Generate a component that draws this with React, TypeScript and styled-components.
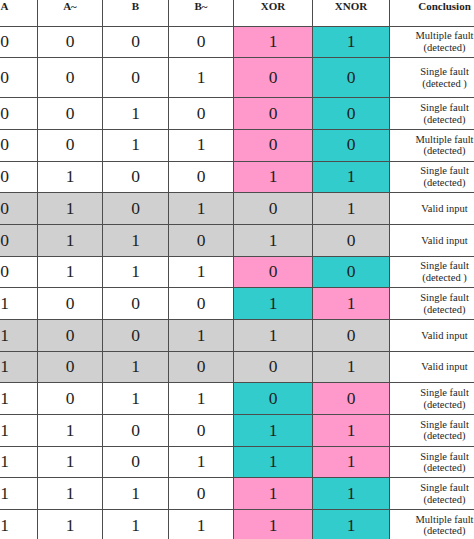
import React from 'react'
import styled, { createGlobalStyle } from 'styled-components'

type Tone = 'pink' | 'teal' | 'gray' | 'white'

interface Row {
  bits: string[]
  xor: string
  xnor: string
  xorTone: Tone
  xnorTone: Tone
  conclusion: string[]
  tall?: boolean
}

const single = ['Single fault', '(detected)']
const singleSp = ['Single fault', '(detected )']
const multiple = ['Multiple fault', '(detected)']
const valid = ['Valid input']

const rows: Row[] = [
  { bits: ['0', '0', '0', '0'], xor: '1', xnor: '1', xorTone: 'pink', xnorTone: 'teal', conclusion: multiple },
  { bits: ['0', '0', '0', '1'], xor: '0', xnor: '0', xorTone: 'pink', xnorTone: 'teal', conclusion: singleSp, tall: true },
  { bits: ['0', '0', '1', '0'], xor: '0', xnor: '0', xorTone: 'pink', xnorTone: 'teal', conclusion: single },
  { bits: ['0', '0', '1', '1'], xor: '0', xnor: '0', xorTone: 'pink', xnorTone: 'teal', conclusion: multiple },
  { bits: ['0', '1', '0', '0'], xor: '1', xnor: '1', xorTone: 'pink', xnorTone: 'teal', conclusion: single },
  { bits: ['0', '1', '0', '1'], xor: '0', xnor: '1', xorTone: 'gray', xnorTone: 'gray', conclusion: valid },
  { bits: ['0', '1', '1', '0'], xor: '1', xnor: '0', xorTone: 'gray', xnorTone: 'gray', conclusion: valid },
  { bits: ['0', '1', '1', '1'], xor: '0', xnor: '0', xorTone: 'pink', xnorTone: 'teal', conclusion: singleSp },
  { bits: ['1', '0', '0', '0'], xor: '1', xnor: '1', xorTone: 'teal', xnorTone: 'pink', conclusion: single },
  { bits: ['1', '0', '0', '1'], xor: '1', xnor: '0', xorTone: 'gray', xnorTone: 'gray', conclusion: valid },
  { bits: ['1', '0', '1', '0'], xor: '0', xnor: '1', xorTone: 'gray', xnorTone: 'gray', conclusion: valid },
  { bits: ['1', '0', '1', '1'], xor: '0', xnor: '0', xorTone: 'teal', xnorTone: 'pink', conclusion: single },
  { bits: ['1', '1', '0', '0'], xor: '1', xnor: '1', xorTone: 'teal', xnorTone: 'pink', conclusion: single },
  { bits: ['1', '1', '0', '1'], xor: '1', xnor: '1', xorTone: 'teal', xnorTone: 'pink', conclusion: single },
  { bits: ['1', '1', '1', '0'], xor: '1', xnor: '1', xorTone: 'pink', xnorTone: 'teal', conclusion: single },
  { bits: ['1', '1', '1', '1'], xor: '1', xnor: '1', xorTone: 'pink', xnorTone: 'teal', conclusion: multiple },
]

const tones: Record<Tone, string> = {
  pink: '#ff99cc',
  teal: '#33cccc',
  gray: '#d0d0d0',
  white: '#ffffff',
}

const widths = [66, 65, 66, 65, 79, 77, 110]
const headers = ['A', 'A~', 'B', 'B~', 'XOR', 'XNOR', 'Conclusion']

const App: React.FC = () => {
  return (
    <>
      <GlobalStyle />
      <Frame>
        <Table>
          <colgroup>
            {widths.map((w, i) => (
              <col key={i} style={{ width: w }} />
            ))}
          </colgroup>
          <thead>
            <HeadRow>
              {headers.map((h) => (
                <HeadCell key={h}>{h}</HeadCell>
              ))}
            </HeadRow>
          </thead>
          <tbody>
            {rows.map((r, i) => {
              const isValid = r.xorTone === 'gray'
              return (
                <BodyRow key={i} $tall={r.tall}>
                  {r.bits.map((b, j) => (
                    <Digit key={j} $tone={isValid ? 'gray' : 'white'}>
                      {b}
                    </Digit>
                  ))}
                  <Digit $tone={r.xorTone}>{r.xor}</Digit>
                  <Digit $tone={r.xnorTone}>{r.xnor}</Digit>
                  <Conclusion>
                    {r.conclusion.map((line) => (
                      <Line key={line}>{line}</Line>
                    ))}
                  </Conclusion>
                </BodyRow>
              )
            })}
          </tbody>
        </Table>
      </Frame>
    </>
  )
}

const GlobalStyle = createGlobalStyle`
  html, body {
    margin: 0;
    padding: 0;
    background: #ffffff;
  }
`

const Frame = styled.div`
  width: 474px;
  height: 539px;
  overflow: hidden;
  background: #ffffff;
`

const Table = styled.table`
  border-collapse: collapse;
  table-layout: fixed;
  width: 528px;
  margin-left: -29px;
  margin-top: -18px;
  font-family: 'Liberation Serif', 'Times New Roman', serif;
  color: #1e1e1e;

  td,
  th {
    border: 1.5px solid #4d4d4d;
    padding: 0;
    text-align: center;
    vertical-align: middle;
  }
`

const HeadRow = styled.tr`
  height: 43.5px;
`

const HeadCell = styled.th`
  font-size: 11px;
  font-weight: bold;
  && {
    padding-top: 4px;
  }
`

const BodyRow = styled.tr<{ $tall?: boolean }>`
  height: ${({ $tall }) => ($tall ? '40px' : '31.7px')};
`

const Digit = styled.td<{ $tone: Tone }>`
  background: ${({ $tone }) => tones[$tone]};
  font-size: 17.5px;
  line-height: 1;
`

const Conclusion = styled.td`
  background: #ffffff;
  font-size: 10.5px;
  line-height: 11.5px;
`

const Line = styled.div`
  white-space: nowrap;
`

export default App
